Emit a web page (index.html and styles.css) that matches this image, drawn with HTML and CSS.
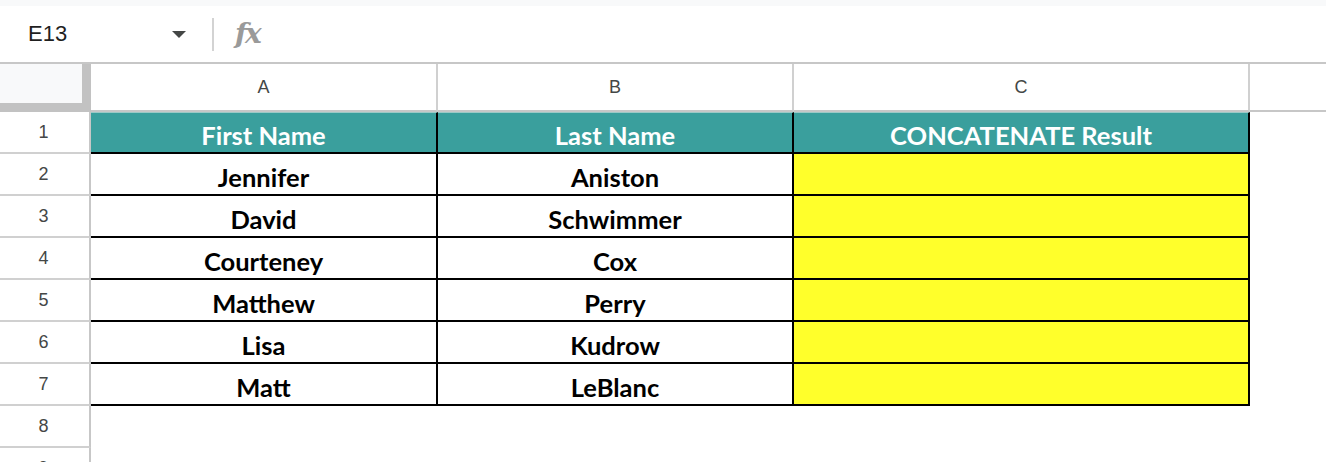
FILE: index.html
```html
<!DOCTYPE html>
<html>
<head>
<meta charset="utf-8">
<link rel="stylesheet" href="styles.css">
</head>
<body>
<div class="topstrip"></div>
<div class="fbar">
  <div class="namebox">
    <span class="cellref">E13</span>
    <span class="caret"></span>
  </div>
  <div class="sep"></div>
  <span class="fx">fx</span>
</div>
<div class="sheet">
  <div class="corner"></div>
  <div class="colhead">A</div>
  <div class="colhead">B</div>
  <div class="colhead">C</div>
  <div class="colhead last"></div>

  <div class="rowhead">1</div>
  <div class="cell th">First Name</div>
  <div class="cell th">Last Name</div>
  <div class="cell th">CONCATENATE Result</div>
  <div class="blank"></div>

  <div class="rowhead">2</div>
  <div class="cell">Jennifer</div>
  <div class="cell">Aniston</div>
  <div class="cell res"></div>
  <div class="blank"></div>

  <div class="rowhead">3</div>
  <div class="cell">David</div>
  <div class="cell">Schwimmer</div>
  <div class="cell res"></div>
  <div class="blank"></div>

  <div class="rowhead">4</div>
  <div class="cell">Courteney</div>
  <div class="cell">Cox</div>
  <div class="cell res"></div>
  <div class="blank"></div>

  <div class="rowhead">5</div>
  <div class="cell">Matthew</div>
  <div class="cell">Perry</div>
  <div class="cell res"></div>
  <div class="blank"></div>

  <div class="rowhead">6</div>
  <div class="cell">Lisa</div>
  <div class="cell">Kudrow</div>
  <div class="cell res"></div>
  <div class="blank"></div>

  <div class="rowhead">7</div>
  <div class="cell">Matt</div>
  <div class="cell">LeBlanc</div>
  <div class="cell res"></div>
  <div class="blank"></div>

  <div class="rowhead">8</div>
  <div class="blank"></div>
  <div class="blank"></div>
  <div class="blank"></div>
  <div class="blank"></div>

  <div class="rowhead">9</div>
  <div class="blank"></div>
  <div class="blank"></div>
  <div class="blank"></div>
  <div class="blank"></div>
</div>
</body>
</html>
```

FILE: styles.css
```css
html, body {
  margin: 0;
  padding: 0;
  background: #ffffff;
  overflow: hidden;
}
body {
  width: 1326px;
  height: 462px;
  font-family: Arial, "Liberation Sans", sans-serif;
}
.topstrip {
  height: 6px;
  background: #f8f9fa;
}
.fbar {
  height: 56px;
  display: flex;
  align-items: center;
  border-bottom: 2px solid #c7c7c7;
  background: #fff;
}
.namebox {
  width: 212px;
  display: flex;
  align-items: center;
  box-sizing: border-box;
  padding-left: 28px;
  padding-right: 26px;
}
.cellref {
  font-size: 22px;
  color: #1f1f1f;
  flex: 1;
}
.caret {
  width: 0;
  height: 0;
  border-left: 7px solid transparent;
  border-right: 7px solid transparent;
  border-top: 7px solid #444746;
}
.sep {
  width: 2px;
  height: 33px;
  background: #d3d3d3;
}
.fx {
  margin-left: 21px;
  font-family: "DejaVu Serif", "Liberation Serif", serif;
  font-style: italic;
  font-weight: bold;
  font-size: 28px;
  color: #9a9a9a;
  letter-spacing: -2px;
  margin-top: -2px;
}
.sheet {
  display: grid;
  grid-template-columns: 91px 347px 356px 456px 76px;
  grid-template-rows: 48px repeat(9, 42px);
}
.sheet > div {
  box-sizing: border-box;
}
.corner {
  background: #f8f9fa;
  border-right: 9px solid #c2c2c2;
  border-bottom: 9px solid #c2c2c2;
}
.colhead {
  display: flex;
  align-items: center;
  justify-content: center;
  font-size: 18px;
  color: #444746;
  border-right: 2px solid #d0d0d0;
  border-bottom: 2px solid #c7c7c7;
  padding-top: 1px;
}
.colhead.last {
  border-right: none;
}
.rowhead {
  display: flex;
  align-items: center;
  justify-content: center;
  font-size: 18px;
  color: #444746;
  border-right: 2px solid #c7c7c7;
  border-bottom: 2px solid #d0d0d0;
  padding-right: 2px;
}
.cell {
  display: flex;
  align-items: center;
  justify-content: center;
  font-family: Lato, "Open Sans", sans-serif;
  font-weight: 700;
  font-size: 25.5px;
  color: #000;
  border-right: 2px solid #000;
  border-bottom: 2px solid #000;
  padding-top: 5px;
}
.cell.th {
  background: #3a9f9d;
  color: #ffffff;
  border-top: 1px solid #9cc9c7;
}
.cell.res {
  background: #ffff2b;
}
.blank {
  background: #fff;
}
```
